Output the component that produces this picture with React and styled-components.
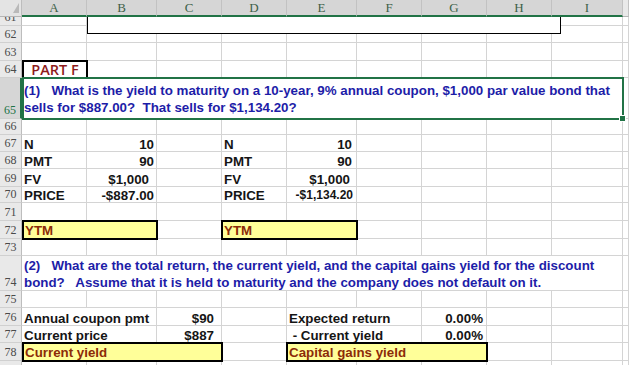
import React from "react";
import styled, { createGlobalStyle, css } from "styled-components";

const GlobalStyle = createGlobalStyle`
  html, body {
    margin: 0;
    padding: 0;
    background: #fff;
  }
  body {
    width: 629px;
    height: 365px;
    overflow: hidden;
  }
`;

const GRID = "#d4d4d4";
const GREEN = "#217346";

const tones = {
  ink: "#151515",
  blue: "#1d1da8",
  red: "#8e1b1b",
  brown: "#8c2b08",
};

const justify = { left: "flex-start", right: "flex-end", center: "center" };

const columns = ["A", "B", "C", "D", "E", "F", "G", "H", "I", ""];
const widths = "22px 65px 70px 65px 65px 70px 65px 65px 65px 71px 1fr";

const rows = [
  { n: 61, h: 9 },
  { n: 62, h: 17 },
  { n: 63, h: 18 },
  { n: 64, h: 17 },
  { n: 65, h: 41, active: true },
  { n: 66, h: 16 },
  { n: 67, h: 17 },
  { n: 68, h: 17 },
  { n: 69, h: 18 },
  { n: 70, h: 16 },
  { n: 71, h: 18 },
  { n: 72, h: 18 },
  { n: 73, h: 17 },
  { n: 74, h: 35 },
  { n: 75, h: 17 },
  { n: 76, h: 18 },
  { n: 77, h: 17 },
  { n: 78, h: 18 },
  { n: 79, h: 17, hidden: true },
];

const cells = {
  64: [{ col: 0, kind: "part", text: "PART F" }],
  65: [
    {
      col: 0,
      span: 9,
      kind: "question",
      selected: true,
      text: "(1)   What is the yield to maturity on a 10-year, 9% annual coupon, $1,000 par value bond that\nsells for $887.00?  That sells for $1,134.20?",
    },
  ],
  67: [
    { col: 0, text: "N" },
    { col: 1, text: "10", align: "right", pr: 2 },
    { col: 3, text: "N" },
    { col: 4, text: "10", align: "right", pr: 4 },
  ],
  68: [
    { col: 0, text: "PMT" },
    { col: 1, text: "90", align: "right", pr: 2 },
    { col: 3, text: "PMT" },
    { col: 4, text: "90", align: "right", pr: 4 },
  ],
  69: [
    { col: 0, text: "FV" },
    { col: 1, text: "$1,000", align: "right", pr: 7 },
    { col: 3, text: "FV" },
    { col: 4, text: "$1,000", align: "right", pr: 6 },
  ],
  70: [
    { col: 0, text: "PRICE" },
    { col: 1, text: "-$887.00", align: "right", pr: 2 },
    { col: 3, text: "PRICE" },
    { col: 4, text: "-$1,134.20", align: "right", pr: 3, size: 12 },
  ],
  72: [
    { col: 0, span: 2, kind: "answer", text: "YTM" },
    { col: 3, span: 2, kind: "answer", text: "YTM" },
  ],
  74: [
    {
      col: 0,
      span: 9,
      kind: "question",
      drop: 2,
      text: "(2)   What are the total return, the current yield, and the capital gains yield for the discount\nbond?   Assume that it is held to maturity and the company does not default on it.",
    },
  ],
  76: [
    { col: 0, span: 2, text: "Annual coupon pmt" },
    { col: 2, text: "$90", align: "right", pr: 7 },
    { col: 4, span: 2, text: "Expected return" },
    { col: 6, text: "0.00%", align: "right", pr: 3 },
  ],
  77: [
    { col: 0, span: 2, text: "Current price" },
    { col: 2, text: "$887", align: "right", pr: 7 },
    { col: 4, span: 2, text: " - Current yield" },
    { col: 6, text: "0.00%", align: "right", pr: 3 },
  ],
  78: [
    { col: 0, span: 3, kind: "answer", text: "Current yield" },
    { col: 4, span: 3, kind: "answer", text: "Capital gains yield" },
  ],
};

const Sheet = styled.div`
  position: relative;
  display: grid;
  grid-template-columns: ${widths};
  grid-template-rows: ${(p) => p.$rows};
  width: 629px;
  height: 365px;
  overflow: hidden;
  background: #fff;
`;

const Corner = styled.div`
  position: relative;
  z-index: 2;
  box-sizing: border-box;
  display: flex;
  justify-content: flex-end;
  align-items: flex-end;
  padding: 0 2px 3px 0;
  background: #e4e4e4;
  border-right: 1px solid #bdbdbd;
  border-bottom: 1px solid #b5b5b5;
`;

const CornerMark = styled.svg`
  width: 6px;
  height: 10px;
  fill: #b9b9b9;
`;

const ColHead = styled.div`
  position: relative;
  z-index: 2;
  box-sizing: border-box;
  display: flex;
  align-items: center;
  justify-content: center;
  background: ${(p) => (p.$active ? "#d6d6d6" : "#e9e9e9")};
  border-right: 1px solid #c2c2c2;
  border-bottom: ${(p) => (p.$active ? `2px solid ${GREEN}` : "1px solid #b5b5b5")};
  font-family: "Liberation Serif", "Times New Roman", serif;
  font-size: 13px;
  color: #3d5f48;
`;

const RowHead = styled.div`
  box-sizing: border-box;
  display: flex;
  align-items: flex-end;
  justify-content: center;
  overflow: hidden;
  background: ${(p) => (p.$active ? "#d6d6d6" : "#e9e9e9")};
  border-right: ${(p) => (p.$active ? `2px solid ${GREEN}` : "1px solid #bdbdbd")};
  border-bottom: 1px solid #d0d0d0;
  font-family: "Liberation Serif", "Times New Roman", serif;
  font-size: 12px;
  line-height: 15px;
  color: ${(p) => (p.$active ? GREEN : "#4a4a4a")};
`;

const Cell = styled.div`
  box-sizing: border-box;
  grid-column: span ${(p) => p.$span || 1};
  min-width: 0;
  display: flex;
  align-items: flex-end;
  justify-content: ${(p) => justify[p.$align || "left"]};
  padding: 0 ${(p) => p.$pr ?? 2}px 0 2px;
  border-right: 1px solid ${GRID};
  border-bottom: 1px solid ${GRID};
  font-family: "Liberation Sans", Arial, sans-serif;
  font-weight: bold;
  font-size: ${(p) => p.$size || 13.33}px;
  line-height: 13px;
  color: ${(p) => tones[p.$tone || "ink"]};
  white-space: pre;
`;

const AnswerBox = styled(Cell)`
  position: relative;
  z-index: 1;
  margin: -1px -1px -1px ${(p) => (p.$edge ? 0 : -1)}px;
  border: 2px solid #000;
  background: #ffff99;
  padding-left: 1px;
  line-height: 15px;
  color: ${tones.brown};
`;

const PartBox = styled(Cell)`
  position: relative;
  z-index: 1;
  margin: -1px -1px 0 0;
  border: 2px solid #000;
  border-bottom: 0;
  justify-content: center;
  font-family: "Open Sans", "Liberation Sans", sans-serif;
  font-weight: 600;
  font-size: 14.5px;
  line-height: 16px;
  color: ${tones.red};
`;

const Question = styled(Cell)`
  position: relative;
  z-index: 1;
  align-items: center;
  padding-top: ${(p) => p.$drop || 0}px;
  background: #fff;
  line-height: 17px;
  color: ${tones.blue};
  ${(p) =>
    p.$selected &&
    css`
      z-index: 3;
      margin: -1px -1px -1px 0;
      border: 2px solid ${GREEN};
      padding-left: 0;
    `}
`;

const FillHandle = styled.span`
  position: absolute;
  right: -4px;
  bottom: -4px;
  width: 5px;
  height: 5px;
  background: ${GREEN};
  border: 1px solid #fff;
`;

const TextBoxShape = styled.div`
  position: absolute;
  left: 87px;
  top: 0;
  width: 474px;
  height: 34px;
  box-sizing: border-box;
  border: 1px solid #000;
  background: #fff;
  z-index: 1;
`;

const renderCell = (cell, key) => {
  const common = {
    key,
    $span: cell.span,
    $align: cell.align,
    $pr: cell.pr,
    $size: cell.size,
  };
  if (cell.kind === "part") return <PartBox {...common}>{cell.text}</PartBox>;
  if (cell.kind === "answer")
    return (
      <AnswerBox {...common} $edge={cell.col === 0}>
        {cell.text}
      </AnswerBox>
    );
  if (cell.kind === "question")
    return (
      <Question {...common} $selected={cell.selected} $drop={cell.drop}>
        {cell.text}
        {cell.selected && <FillHandle />}
      </Question>
    );
  return <Cell {...common}>{cell.text}</Cell>;
};

const SheetRow = ({ row }) => {
  const list = cells[row.n] || [];
  const out = [
    <RowHead key="h" $active={row.active}>
      {row.hidden ? "" : row.n}
    </RowHead>,
  ];
  let i = 0;
  while (i < columns.length) {
    const cell = list.find((c) => c.col === i);
    if (cell) {
      out.push(renderCell(cell, i));
      i += cell.span || 1;
    } else {
      out.push(<Cell key={i} />);
      i += 1;
    }
  }
  return out;
};

export default function App() {
  const template = "17px " + rows.map((r) => r.h + "px").join(" ");
  return (
    <>
      <GlobalStyle />
      <Sheet $rows={template}>
        <Corner>
          <CornerMark viewBox="0 0 6 10">
            <polygon points="6,0 6,10 0,10" />
          </CornerMark>
        </Corner>
        {columns.map((c, i) => (
          <ColHead key={i} $active={i < 9}>
            {c}
          </ColHead>
        ))}
        <TextBoxShape />
        {rows.map((row) => (
          <SheetRow key={row.n} row={row} />
        ))}
      </Sheet>
    </>
  );
}
